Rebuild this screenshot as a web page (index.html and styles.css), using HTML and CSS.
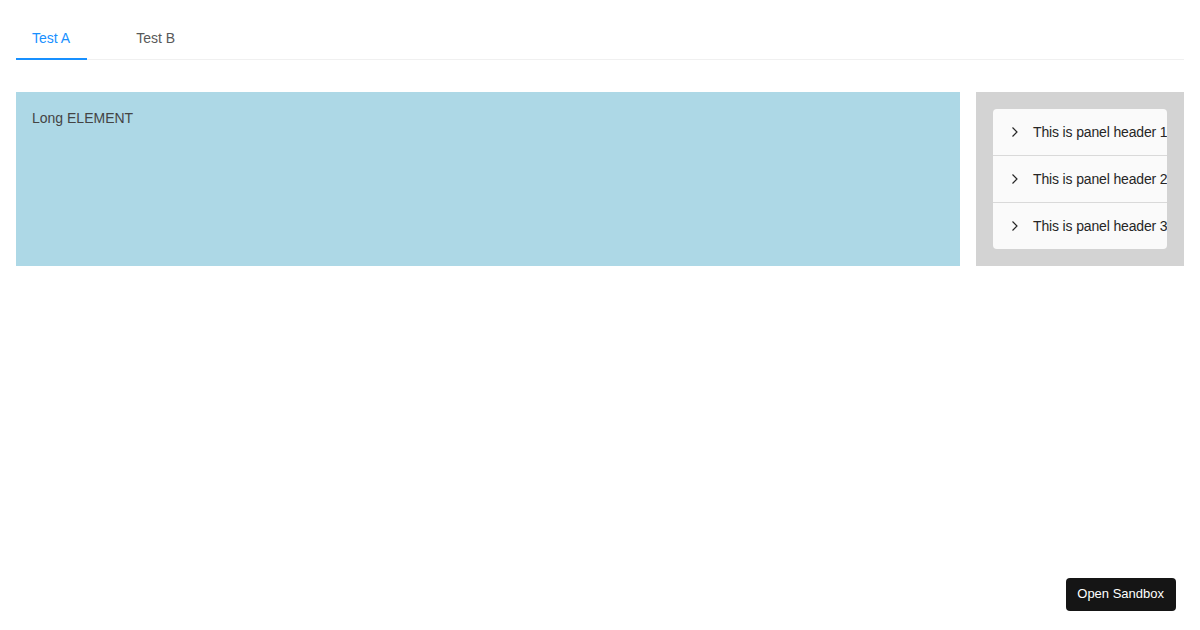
FILE: index.html
```html
<!DOCTYPE html>
<html lang="en">
<head>
    <meta charset="UTF-8">
    <meta name="viewport" content="width=device-width, initial-scale=1.0">
    <title>Tabs</title>
    <link rel="stylesheet" href="styles.css">
</head>
<body>
    <div class="tabs">
        <div class="tab-nav">
            <div class="tab active">Test A</div>
            <div class="tab">Test B</div>
        </div>
        <div class="tab-content">
            <div class="long">Long ELEMENT</div>
            <div class="side">
                <div class="collapse">
                    <div class="panel">
                        <svg class="arrow" viewBox="0 0 12 12" width="12" height="12"><path d="M3.5 1.5 L8 6 L3.5 10.5" fill="none" stroke="#262626" stroke-width="1.2"/></svg>
                        This is panel header 1
                    </div>
                    <div class="panel">
                        <svg class="arrow" viewBox="0 0 12 12" width="12" height="12"><path d="M3.5 1.5 L8 6 L3.5 10.5" fill="none" stroke="#262626" stroke-width="1.2"/></svg>
                        This is panel header 2
                    </div>
                    <div class="panel">
                        <svg class="arrow" viewBox="0 0 12 12" width="12" height="12"><path d="M3.5 1.5 L8 6 L3.5 10.5" fill="none" stroke="#262626" stroke-width="1.2"/></svg>
                        This is panel header 3
                    </div>
                </div>
            </div>
        </div>
    </div>

    <a class="sandbox" href="#">Open Sandbox</a>
</body>
</html>
```

FILE: styles.css
```css
body {
    margin: 0;
    padding: 16px;
    font-family: 'Liberation Sans', Arial, sans-serif;
    font-size: 14px;
    line-height: 22px;
    color: rgba(0, 0, 0, 0.85);
    background: #fff;
}

.tab-nav {
    display: flex;
    gap: 33px;
    border-bottom: 1px solid #f0f0f0;
    margin-bottom: 32px;
}

.tab {
    padding: 11px 17px 9px 16px;
    color: #595959;
    border-bottom: 2px solid transparent;
    margin-bottom: -1px;
}

.tab.active {
    color: #1890ff;
    border-bottom-color: #1890ff;
}

.tab-content {
    display: flex;
    gap: 16px;
}

.long {
    flex: 1;
    height: 174px;
    box-sizing: border-box;
    padding: 15px 16px;
    background: lightblue;
    color: #444;
}

.side {
    width: 208px;
    height: 174px;
    box-sizing: border-box;
    padding: 17px 17px 16px;
    background: lightgray;
}

.collapse {
    width: 174px;
    overflow: hidden;
    white-space: nowrap;
    background: #fafafa;
    border-radius: 4px;
}

.panel {
    display: flex;
    align-items: center;
    height: 46px;
    padding-left: 16px;
    color: #262626;
    letter-spacing: -0.15px;
    border-bottom: 1px solid #d9d9d9;
}

.panel:last-child {
    border-bottom: none;
}

.arrow {
    margin-right: 12px;
    flex-shrink: 0;
}

.sandbox {
    position: fixed;
    right: 24px;
    bottom: 19px;
    padding: 8px 12px 9px 11px;
    background: #151515;
    color: #fff;
    font-family: 'Liberation Sans', Arial, sans-serif;
    font-size: 13px;
    line-height: 16px;
    border-radius: 4px;
    text-decoration: none;
}
```
